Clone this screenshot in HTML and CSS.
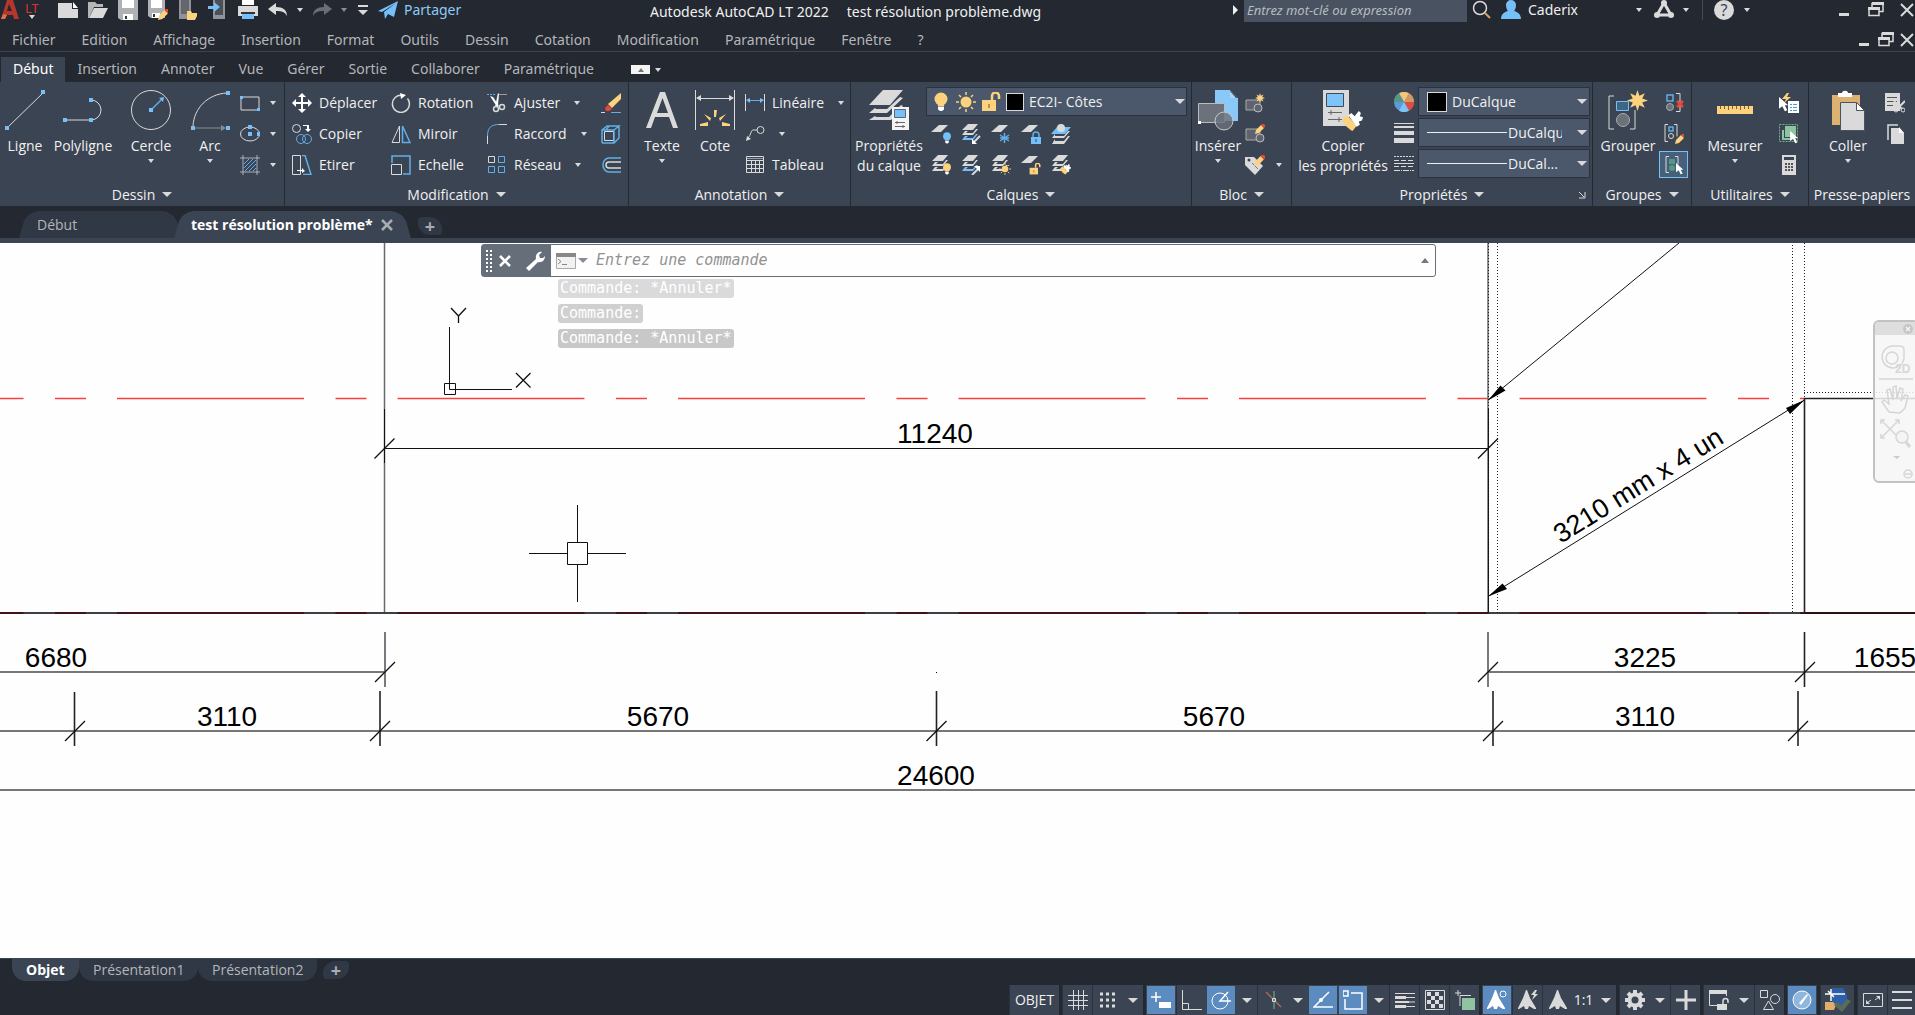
FILE: index.html
```html
<!DOCTYPE html>
<html lang="fr">
  <head>
    <meta charset="UTF-8" />
    <title>Autodesk AutoCAD LT 2022 - test résolution problème.dwg</title>
    <link rel="stylesheet" href="styles.css">
  </head>
  <body>
    <!-- Formes réutilisées par plusieurs icônes -->
    <svg class="defs" width="0" height="0">
      <symbol id="layer" viewBox="0 0 20 20"><path class="fw" d="M8 1h9l-7 7H0z"/></symbol>
      <symbol id="stack" viewBox="0 0 20 20">
        <path class="fw" d="M7 0h10l-5 6H1z"/>
        <path class="fw" d="M4 7l-3 4h11l5-6h-2l-3 4H5l2-2zM4 12l-3 4h11l5-6h-2l-3 4H5l2-2z"/>
      </symbol>
      <symbol id="stack-blue" viewBox="0 0 20 20">
        <path class="fw" d="M7 0h10l-5 6H1zM4 7l-3 4h11l5-6h-2l-3 4H5l2-2z"/>
        <path class="fb" d="M4 12l-3 4h11l5-6h-2l-3 4H5l2-2z"/>
      </symbol>
      <symbol id="bulb" viewBox="0 0 20 20">
        <circle cx="10" cy="7" r="6.500"/><path d="M6 9h8l-1 5H7z"/>
        <path class="fl" d="M7 14.500h6v3l-2 1.500H9l-2-1.500z"/>
      </symbol>
      <symbol id="sun" viewBox="0 0 20 20">
        <circle class="fy" cx="10" cy="10" r="5.500"/>
        <path class="y" stroke-width="1.500" d="M10 0v3M10 17v3M0 10h3M17 10h3M3 3l2 2M15 15l2 2M17 3l-2 2M5 15l-2 2"/>
      </symbol>
      <symbol id="unlock" viewBox="0 0 20 20">
        <path class="fy" d="M1 8h14v11H1z"/><path class="y" stroke-width="2.500" d="M11 8V4a3.500 3.500 0 0 1 7 0v3"/>
        <path d="M8 12v4" stroke="#a87b30" stroke-width="1.500"/>
      </symbol>
      <symbol id="pencil" viewBox="0 0 10 10">
        <path class="fy" d="M0 10l1-4 5-5 3 3-5 5z"/><path class="fr" d="M6 1l1-1h2l1 1v2L9 4z"/>
      </symbol>
      <symbol id="star" viewBox="0 0 20 20">
        <path class="fy" d="M10 0l1.800 5.500L17 3l-2.500 5.200L20 10l-5.500 1.800L17 17l-5.200-2.500L10 20l-1.800-5.500L3 17l2.500-5.200L0 10l5.500-1.800L3 3l5.200 2.500z"/>
      </symbol>
      <symbol id="cursor" viewBox="0 0 12 18"><path d="M0 0l11 10H7l3 6-3 1-3-6-4 3z" fill="#fff"/></symbol>
      <symbol id="brush" viewBox="0 0 20 20">
        <path class="fy" d="M0 8l5-4 9 10-4 5C6 17 2 13 0 8z"/>
        <path class="fl" d="M6 4l3-2 3 3 4-5 2 2-1 3 3 1-1 3-3 1 1 3-3 2z"/>
      </symbol>
      <symbol id="min" viewBox="0 0 16 16"><path class="fw" d="M2 11h10v3H2z"/></symbol>
      <symbol id="restore" viewBox="0 0 16 16">
        <path class="w" stroke-width="1.500" d="M4 5V1.500h11v8h-4"/><path class="w" stroke-width="1.500" d="M1 6.500h10v7H1z"/>
        <path class="fw" d="M4 0h12v3H4zM0 5h12v3H0z"/>
      </symbol>
      <symbol id="close" viewBox="0 0 16 16"><path class="w" stroke-width="2" d="M2 2l12 12M14 2L2 14"/></symbol>
      <symbol id="compass" viewBox="0 0 20 20"><path d="M9 0h1l3 8 6 10v1h-2l-5-3-1 3H8l-1-3-5 3H1v-1L6 8z"/></symbol>
    </svg>

    <header class="titlebar">
      <div class="quick">
        <button class="logo" aria-label="Menu application">
          <svg width="18" height="20" viewBox="0 0 18 20"><path d="M0 19L6 0h6l6 19h-5l-1-4H6l-2 4z" fill="#b5372b"/><path d="M8 4l3 7H6z" fill="#232831"/><path d="M6 15l-2 4H0l2-5z" fill="#e66a52"/></svg>
          <span class="lt">LT<i class="caret"></i></span>
        </button>
        <button aria-label="Nouveau"><svg width="20" height="20"><path class="fw" d="M0 3h14v6h6v9H0z"/><path class="fl" d="M15 2l5 6h-5z"/></svg></button>
        <button aria-label="Ouvrir"><svg width="20" height="20"><path class="fw" d="M0 2h7l2 2h6v3H6L1 18H0z" opacity=".8"/><path class="fw" d="M6 8h14l-5 10H1z"/></svg></button>
        <button aria-label="Enregistrer"><svg width="20" height="20"><path d="M0 0h20v20H3l-3-2z" fill="#aeb1b5"/><path class="fl" d="M4 0h12v8H4zM5 14h10v6H5z"/><path d="M7 16h2v3H7z" fill="#333"/></svg></button>
        <button aria-label="Enregistrer sous"><svg width="20" height="20"><path d="M0 0h17v18H3l-3-2z" fill="#aeb1b5"/><path class="fl" d="M3 0h11v8H3zM4 13h8v5H4z"/><path d="M5 14h2v3H5z" fill="#333"/><use href="#pencil" x="10" y="9" width="11" height="11"/></svg></button>
        <button aria-label="Ouvrir depuis mobile"><svg width="20" height="20"><path d="M1 0h12v19H1z" fill="#8f9296"/><path d="M3 0h8v14H3z" fill="#63676d"/><path class="fy" d="M9 11h4l1 2h5v3l-2 4H9z"/></svg></button>
        <button aria-label="Enregistrer sur mobile"><svg width="20" height="20"><path d="M5 0h12v19H5z" fill="#8f9296"/><path d="M7 0h8v15H7z" fill="#4b5058"/><path class="fb" d="M0 6h6V2l6 5-6 5V9H0z"/></svg></button>
        <button aria-label="Imprimer"><svg width="20" height="20"><path class="fl" d="M4 0h12v5H4z"/><path class="fw" d="M0 6h20v10H0z"/><path d="M3 12h14v2H3z" fill="#333"/><path class="fb" d="M4 14h12v5H4z"/></svg></button>
        <button aria-label="Annuler"><svg width="20" height="20"><path class="fw" d="M0 9l8-6v4c7 0 11 3 11 9-2-4-5-5-11-5v4z"/></svg></button>
        <button class="narrow" aria-label="Historique annuler"><i class="caret"></i></button>
        <button aria-label="Rétablir"><svg width="20" height="20"><path fill="#6a6f77" d="M20 9l-8-6v4C5 7 1 10 1 16c2-4 5-5 11-5v4z"/></svg></button>
        <button class="narrow" aria-label="Historique rétablir"><i class="caret dim"></i></button>
        <button class="custom" aria-label="Personnaliser"><svg width="12" height="12"><path class="fw" d="M1 1h10v2H1zM1 6h10l-5 5z"/></svg></button>
        <button class="share"><svg width="20" height="20"><path class="fb" d="M0 11L20 1l-4 16-6-3-3 5-1-7 12-9L4 12z"/></svg>Partager</button>
      </div>
      <div class="app-title"><span>Autodesk AutoCAD LT 2022</span><span>test résolution problème.dwg</span></div>
      <div class="info-center">
        <i class="caret-right"></i>
        <input class="search" type="text" aria-label="Recherche" placeholder="Entrez mot-clé ou expression">
        <button aria-label="Rechercher"><svg width="20" height="20"><circle class="w" cx="8" cy="8" r="6.500" stroke-width="1.500"/><path d="M13 13l5 5" stroke="#d9a06a" stroke-width="2"/></svg></button>
        <button class="user"><svg width="20" height="20"><path class="fb" d="M5 5a5 5 0 0 1 10 0c0 4-2 6-2 6s7 1 7 8H0c0-7 7-8 7-8S5 9 5 5z"/></svg>Caderix<i class="caret"></i></button>
        <button class="apps" aria-label="App Store"><svg width="20" height="20"><path class="w" stroke-width="3" d="M10 3L3 15h14z"/><circle class="fw" cx="10" cy="3" r="3"/><circle class="fw" cx="3" cy="15" r="3"/><circle class="fw" cx="17" cy="15" r="3"/></svg><i class="caret"></i></button>
        <button class="help" aria-label="Aide"><svg width="20" height="20"><circle class="fw" cx="10" cy="10" r="10"/><text x="10" y="16" text-anchor="middle" class="q">?</text></svg><i class="caret"></i></button>
        <div class="win">
          <button aria-label="Réduire"><svg width="16" height="16"><use href="#min"/></svg></button>
          <button aria-label="Restaurer"><svg width="16" height="16"><use href="#restore"/></svg></button>
          <button aria-label="Fermer"><svg width="16" height="16"><use href="#close"/></svg></button>
        </div>
      </div>
    </header>

    <nav class="menubar">
      <a href="#">Fichier</a><a href="#">Edition</a><a href="#">Affichage</a><a href="#">Insertion</a><a href="#">Format</a><a href="#">Outils</a><a href="#">Dessin</a><a href="#">Cotation</a><a href="#">Modification</a><a href="#">Paramétrique</a><a href="#">Fenêtre</a><a href="#">?</a>
      <div class="win">
        <button aria-label="Réduire le dessin"><svg width="16" height="16"><use href="#min"/></svg></button>
        <button aria-label="Restaurer le dessin"><svg width="16" height="16"><use href="#restore"/></svg></button>
        <button aria-label="Fermer le dessin"><svg width="16" height="16"><use href="#close"/></svg></button>
      </div>
    </nav>

    <nav class="ribbon-tabs">
      <a href="#" class="active">Début</a><a href="#">Insertion</a><a href="#">Annoter</a><a href="#">Vue</a><a href="#">Gérer</a><a href="#">Sortie</a><a href="#">Collaborer</a><a href="#">Paramétrique</a>
      <button class="collapse" aria-label="Réduire le ruban"><i class="caret-up"></i></button>
      <button class="narrow" aria-label="Options du ruban"><i class="caret"></i></button>
    </nav>

    <section class="ribbon">
      <div class="panel p-dessin">
        <div class="body">
          <button class="big w50"><svg width="40" height="42"><path class="w" d="M2 38L39 2"/><path class="fb" d="M0 36h4v4H0zM36 0h4v4h-4z"/></svg>Ligne</button>
          <button class="big w66"><svg width="40" height="42"><path class="w" d="M2 30h26a10 10 0 0 0 0-20"/><path class="fb" d="M0 28h4v4H0zM26 28h4v4h-4zM26 8h4v4h-4z"/></svg>Polyligne</button>
          <button class="big w70"><svg width="40" height="42"><circle class="w" cx="20" cy="20" r="19.500"/><path class="b" stroke-width="1.500" d="M20 20L30 10"/><path class="fb" d="M18 18h4v4h-4zM33 7l-1 5-4-4z"/></svg>Cercle<i class="caret"></i></button>
          <button class="big w48"><svg width="40" height="42"><path class="w" d="M3 36C4 18 18 4 37 3"/><path d="M5 38h27" stroke="#888c92"/><path d="M31 35l5 3-5 3z" fill="#888c92"/><path class="fb" d="M1 36h4v4H1zM36 36h4v4h-4zM36 1h4v4h-4z"/></svg>Arc<i class="caret"></i></button>
          <div class="rows">
            <button aria-label="Rectangle"><svg width="20" height="20"><path class="w" d="M1 4h18v13H1z"/><path class="fb" d="M0 3h3v3H0zM17 15h3v3h-3z"/></svg><i class="caret"></i></button>
            <button aria-label="Ellipse"><svg width="20" height="20"><ellipse class="w" cx="10" cy="10" rx="9.500" ry="7"/><path class="fb" d="M8 1h4v4H8zM8 8h4v4H8zM17 8h3v4h-3z"/></svg><i class="caret"></i></button>
            <button aria-label="Hachures"><svg width="20" height="20"><path class="w" opacity=".7" d="M3 0v20M17 0v20M0 3h20M0 17h20"/><path class="b" d="M4 9l5-5M4 13l9-9M5 16L16 5M9 16l7-7M13 16l3-3"/></svg><i class="caret"></i></button>
          </div>
        </div>
        <div class="panel-title">Dessin<i class="caret lg"></i></div>
      </div>

      <div class="panel p-modif">
        <div class="body">
          <div class="rows c99">
            <button><svg width="20" height="20"><path class="fl" d="M10 0l4 4h-3v5h5V6l4 4-4 4v-3h-5v5h3l-4 4-4-4h3v-5H4v3l-4-4 4-4v3h5V4H6z"/></svg>Déplacer</button>
            <button><svg width="20" height="20"><circle class="w" cx="4.500" cy="4.500" r="4"/><path class="fl" d="M11 1h6v4h2l-3 3-3-3h2V2h-4z"/><circle class="b" cx="9" cy="15" r="4.500"/><circle class="b" cx="15" cy="15" r="4.500"/></svg>Copier</button>
            <button><svg width="20" height="20"><path class="w" d="M.5.500h8v19h-8z"/><path class="b" stroke-width="1.500" d="M10 .5h3l6 19h-8"/><path class="fl" d="M5 15h5v-2l3 3-3 2v-2H5z"/></svg>Etirer</button>
          </div>
          <div class="rows c96">
            <button><svg width="20" height="20"><path class="w" stroke-width="1.500" d="M16.500 5.500a8.500 8.500 0 1 1-5-3"/><path class="fl" d="M9 0l6 2-5 4z"/></svg>Rotation</button>
            <button><svg width="20" height="20"><path class="w" d="M8.500 2v16.500H1z"/><path class="b" stroke-width="1.500" d="M11.500 2v16.500H19z"/></svg>Miroir</button>
            <button><svg width="20" height="20"><path class="b" stroke-width="1.500" d="M1 8V1h18v18h-7"/><path class="w" d="M.5 9.500h10v10H.5z"/></svg>Echelle</button>
          </div>
          <div class="rows c112">
            <button><svg width="20" height="20"><path class="b" stroke-dasharray="2 1" d="M0 1.500h8"/><path class="w" opacity=".6" d="M12 1.500h8"/><path class="fl" d="M3 3l3 1 6 9-2 1zM11 0l1 1-1 11-3 2z"/><circle class="w" cx="9" cy="16" r="2.500" stroke-width="1.500"/><circle class="w" cx="15" cy="14" r="2.500" stroke-width="1.500"/></svg>Ajuster<i class="caret"></i></button>
            <button><svg width="20" height="20"><path class="b" d="M.5 12C.5 4 4 .5 12 .5"/><path class="w" d="M12 .5h8M.5 12v8"/></svg>Raccord<i class="caret"></i></button>
            <button><svg width="20" height="20"><path class="w" d="M1.500 1.500h6v6h-6z"/><path class="b" d="M11.500 1.500h6v6h-6zM1.500 11.500h6v6h-6zM11.500 11.500h6v6h-6z"/></svg>Réseau<i class="caret"></i></button>
          </div>
          <div class="rows">
            <button aria-label="Effacer"><svg width="20" height="20"><path class="fy" d="M20 0v6L11 15l-4-4z"/><path class="fr" d="M7 12l4 4-3 2H5l-1-3z"/><path class="w" d="M0 19.500h4"/><path class="b" d="M10 19.500h10"/></svg></button>
            <button aria-label="Décomposer"><svg width="20" height="20"><path class="w" d="M3.500 7.500h9v9h-9z"/><path class="b" stroke-width="1.500" d="M1 19V6h12v13H1M1 6l5-4h12l-5 4M18 2v12l-5 5M8 2L5 6"/></svg></button>
            <button aria-label="Décaler"><svg width="20" height="20"><path class="b" stroke-width="1.500" d="M20 3H8a6 7 0 0 0 0 14h12"/><path class="w" stroke-width="1.500" d="M20 7H8a3 3 0 0 0 0 6h12"/></svg></button>
          </div>
        </div>
        <div class="panel-title">Modification<i class="caret lg"></i></div>
      </div>

      <div class="panel p-annot">
        <div class="body">
          <button class="big w50"><svg width="40" height="42"><path class="fw" d="M4 38L18 2h5l13 36h-5l-4-11H13L9 38zM15 23h11L20.500 8z"/></svg>Texte<i class="caret"></i></button>
          <button class="big w56"><svg width="40" height="42"><path class="w" d="M.5 0v40M39.500 0v40M3 8.500h34"/><path class="fw" d="M1 8l5-3v6zM39 8l-5-3v6z"/><path class="fy" d="M19 20h3l-1 7h-2zM9 24l7 4-1 3zM31 24l-7 4 1 3zM5 34l8-2v4H5zM35 34l-8-2v4h8z"/></svg>Cote</button>
          <div class="rows">
            <button><svg width="20" height="20"><path class="w" d="M.5 1v17M19.500 1v17"/><path class="b" d="M3 7.500h14"/><path class="fb" d="M1 7l4-2v5zM19 7l-4-2v5z"/></svg>Linéaire<i class="caret"></i></button>
            <button aria-label="Ligne de repère"><svg width="20" height="20"><circle class="w" cx="15.500" cy="6" r="3.500"/><path class="w" d="M12 6H8c-2 0-2 5-5 8"/><path class="fw" d="M1 17l1-5 4 3z"/></svg><i class="caret"></i></button>
            <button><svg width="20" height="20"><path class="w" d="M1.500 1.500h17v16h-17zM1 5.500h18M1 9.500h18M1 13.500h18M6.500 5v12M10.500 5v12M14.500 5v12"/><path class="w" opacity=".6" d="M2 3.500h16"/></svg>Tableau</button>
          </div>
        </div>
        <div class="panel-title">Annotation<i class="caret lg"></i></div>
      </div>

      <div class="panel p-calques">
        <div class="body">
          <button class="big w74"><svg width="40" height="42"><path class="fw" d="M14 0h20L21 15H0z"/><path class="fw" d="M6 18l-6 5h18L34 8l-3-1-13 12H7zM6 26l-6 4h22l12-14-2-1-12 12H7z"/><path fill="#f4f4f4" d="M23 17h17v23H23z"/><path fill="#75c0f8" stroke="#3f4a5a" stroke-width=".8" d="M25.500 19.500h11v8h-11z"/><path d="M26 32.500h10M26 36.500h10M28 31v3M34 35v3" stroke="#666"/></svg>Propriétés<br>du calque</button>
          <div class="rows">
            <label class="combo layer-combo">
              <svg width="20" height="20" class="fy"><use href="#bulb"/></svg>
              <svg width="20" height="20"><use href="#sun"/></svg>
              <svg width="20" height="20"><use href="#unlock"/></svg>
              <span class="swatch"></span>
              <select aria-label="Calque courant"><option>EC2I- Côtes</option></select><i class="caret lg"></i>
            </label>
            <div class="tools">
              <button aria-label="Désactiver"><svg width="20" height="20"><use href="#layer"/><use href="#bulb" class="fb" x="10" y="8" width="12" height="12"/></svg></button>
              <button aria-label="Isoler"><svg width="20" height="20"><use href="#stack-blue"/><path class="w" stroke-width="2" d="M19 12l-6 6"/><path class="fl" d="M11 15v5h5z"/></svg></button>
              <button aria-label="Geler"><svg width="20" height="20"><use href="#layer"/><path class="b" stroke-width="1.500" d="M13.500 9v10M9 11l9 6M9 17l9-6M9 14h9"/></svg></button>
              <button aria-label="Verrouiller"><svg width="20" height="20"><use href="#layer"/><path class="fb" d="M10 13h10v7H10z"/><path class="b" stroke-width="1.500" d="M12 13v-2a3 3 0 0 1 6 0v2"/><path d="M15 15v3" stroke="#2c4d6c"/></svg></button>
              <button aria-label="Rendre courant"><svg width="20" height="20"><path class="fb" d="M6 3h14l-6 7H0z"/><circle class="fw" cx="10" cy="4" r="4"/><path class="fw" d="M4 10l-3 4h12l6-7h-2l-4 5H4zM4 15l-3 5h12l6-8h-2l-4 5H4z"/></svg></button>
            </div>
            <div class="tools">
              <button aria-label="Activer tous"><svg width="20" height="20"><use href="#stack"/><use href="#bulb" class="fy" x="10" y="8" width="12" height="12"/></svg></button>
              <button aria-label="Annuler isoler"><svg width="20" height="20"><use href="#stack-blue"/><path class="w" stroke-width="2" d="M11 20l6-6"/><path class="fl" d="M19 11v6l-6-6z"/></svg></button>
              <button aria-label="Libérer tous"><svg width="20" height="20"><use href="#stack"/><use href="#sun" x="8" y="8" width="12" height="12"/></svg></button>
              <button aria-label="Déverrouiller"><svg width="20" height="20"><use href="#layer"/><use href="#unlock" x="8" y="8" width="12" height="12"/></svg></button>
              <button aria-label="Copier le calque"><svg width="20" height="20"><use href="#stack"/><use href="#brush" x="9" y="9" width="11" height="11"/></svg></button>
            </div>
          </div>
        </div>
        <div class="panel-title">Calques<i class="caret lg"></i></div>
      </div>

      <div class="panel p-bloc">
        <div class="body">
          <button class="big w50"><svg width="40" height="42"><path fill="#8ac8f7" d="M17 0h15l8 8v23H17z"/><path fill="#3b4453" d="M32 0l8 8h-8z"/><path fill="#a8d6f8" d="M32 1l6 7h-6z"/><path fill="#6b727c" stroke="#bbb" d="M.5 13.500h26v19H.5z"/><circle cx="26" cy="31" r="9" fill="#6b727c" fill-opacity=".8" stroke="#c8c8c8"/><path class="fl" d="M0 31h3v3H0z"/></svg>Insérer<i class="caret"></i></button>
          <div class="rows">
            <button aria-label="Créer"><svg width="20" height="20"><path fill="#5d646f" stroke="#aaa" d="M1 17V7h14v10z"/><circle cx="13" cy="15" r="4" fill="#5d646f" stroke="#bbb"/><use href="#star" x="10" y="0" width="10" height="10"/></svg></button>
            <button aria-label="Modifier"><svg width="20" height="20"><path fill="#5d646f" stroke="#aaa" d="M1 16V5h14v11z"/><circle cx="15" cy="14" r="4" fill="#5d646f" stroke="#bbb"/><use href="#pencil" x="10" y="0" width="10" height="10"/></svg></button>
            <button aria-label="Attributs"><svg width="20" height="20"><path class="fw" d="M0 2h9l9 9-8 9L0 10z"/><circle cx="4" cy="5" r="1.500" fill="#3b4453"/><path d="M7 8l6 6" stroke="#777"/><use href="#pencil" x="9" y="0" width="11" height="11"/></svg><i class="caret"></i></button>
          </div>
        </div>
        <div class="panel-title">Bloc<i class="caret lg"></i></div>
      </div>

      <div class="panel p-prop">
        <div class="body">
          <button class="big w100"><svg width="40" height="42"><path class="fw" d="M0 0h26v36H0z"/><path fill="#7fc4f8" stroke="#3f4a5a" d="M3.500 3.500h17v13h-17z"/><path d="M5 22.500h14M5 29.500h14M8 20v5M16 27v5" stroke="#666"/><use href="#brush" x="19" y="21" width="21" height="21"/></svg>Copier<br>les propriétés</button>
          <div class="rows icons">
            <svg width="20" height="20"><circle cx="10" cy="10" r="10" fill="#5b9cd8"/><path d="M10 10L5 1.300A10 10 0 0 1 15 1.300z" fill="#f5c67a"/><path d="M10 10l5-8.700A10 10 0 0 1 20 10z" fill="#d29a62"/><path d="M10 10h10a10 10 0 0 1-5 8.700z" fill="#e04c3f"/><path d="M10 10l5 8.700a10 10 0 0 1-10 0z" fill="#7fc4f8"/><path d="M10 10H0A10 10 0 0 1 5 1.300z" fill="#579685"/></svg>
            <svg width="20" height="20"><path class="fw" d="M0 0h20v1H0zM0 3h20v2H0zM0 8h20v4H0zM0 15h20v5H0z"/></svg>
            <svg width="20" height="20"><path class="w" stroke-dasharray="2 1" d="M0 2.500h20"/><path class="w" stroke-dasharray="5 2" d="M0 6.500h20M0 12.500h20"/><path class="w" d="M0 9.500h20"/><path class="w" stroke-dasharray="6 1 1 1" d="M0 16.500h20"/></svg>
          </div>
          <div class="rows combos">
            <label class="combo"><span class="swatch"></span><select aria-label="Couleur"><option>DuCalque</option></select><i class="caret lg"></i></label>
            <label class="combo"><span class="line"></span><select class="clip" aria-label="Epaisseur"><option>DuCalque</option></select><i class="caret lg"></i></label>
            <label class="combo"><span class="line"></span><select class="clip" aria-label="Type de ligne"><option>DuCal...</option></select><i class="caret lg"></i></label>
          </div>
        </div>
        <div class="panel-title">Propriétés<i class="caret lg"></i><svg class="launcher" width="8" height="8"><path class="w" d="M1 1l5 5M7 1v6H1"/></svg></div>
      </div>

      <div class="panel p-group">
        <div class="body">
          <button class="big w62"><svg width="40" height="42"><path class="w" d="M6 6H1v33h5M22 39h5V20"/><path fill="#3f6584" stroke="#75c0f8" d="M8.500 11.500h12v9h-12z"/><circle cx="15" cy="30" r="6.500" fill="#6b727c" stroke="#aaa"/><use href="#star" x="19" y="0" width="21" height="21"/></svg>Grouper</button>
          <div class="rows">
            <button aria-label="Dissocier"><svg width="20" height="20"><path class="w" d="M12 .5h4v18h-4"/><path class="b" stroke-width="1.500" d="M3 2h6v6H3z"/><circle cx="6" cy="14" r="3.500" fill="#6b727c" stroke="#aaa"/><path d="M13 8l6 6M19 8l-6 6" stroke="#e8473a" stroke-width="2.500"/></svg></button>
            <button aria-label="Modifier le groupe"><svg width="20" height="20"><path class="w" d="M4 .5H1v17h3M10 .5h3v12"/><path class="b" stroke-width="1.500" d="M5 3h4v4H5z"/><circle class="w" cx="7" cy="12" r="2.500"/><use href="#pencil" x="11" y="10" width="10" height="10"/></svg></button>
            <button class="on" aria-label="Sélection de groupe"><svg width="20" height="20"><path class="w" d="M5 1.500H2v16h3M11 1.500h3v8"/><path fill="#579685" d="M5 4h6v5H5z"/><circle cx="8" cy="13" r="3" fill="#579685"/><use href="#cursor" x="12" y="8" width="8" height="12"/></svg></button>
          </div>
        </div>
        <div class="panel-title">Groupes<i class="caret lg"></i></div>
      </div>

      <div class="panel p-util">
        <div class="body">
          <button class="big w70"><svg width="40" height="42"><path class="fy" d="M2 16h36v8H2z"/><path d="M5.500 16v3M9.500 16v3M13.500 16v4M17.500 16v3M21.500 16v3M25.500 16v4M29.500 16v3M33.500 16v3" stroke="#7a6336"/></svg>Mesurer<i class="caret"></i></button>
          <div class="rows">
            <button aria-label="Sélection rapide"><svg width="20" height="20"><path class="fy" d="M8 0L3 6h4L5 10l7-6H8l2-4z"/><use href="#cursor" x="0" y="4" width="10" height="15"/><path class="fl" d="M9 8h11v12H9z"/><path stroke="#4a9bd8" d="M11 11.500h2M14 11.500h4M11 14.500h2M14 14.500h4M11 17.500h2M14 17.500h4"/></svg></button>
            <button aria-label="Tout sélectionner"><svg width="20" height="20"><path fill="none" stroke="#6fae87" stroke-dasharray="2 1" d="M.5.500h18v17H.5z"/><path fill="#8fc4a2" d="M6 2h11v11H6zM3 6h2v8h8v2H3z"/><use href="#cursor" x="11" y="7" width="9" height="13"/></svg></button>
            <button aria-label="Calculatrice"><svg width="20" height="20"><path class="fw" d="M3 0h14v20H3z"/><path fill="#3b4453" d="M5 2h10v3H5z"/><path stroke="#555" stroke-width="2" stroke-dasharray="2 1" d="M6 9h9M6 12h9M6 15h9"/></svg></button>
          </div>
        </div>
        <div class="panel-title">Utilitaires<i class="caret lg"></i></div>
      </div>

      <div class="panel p-clip">
        <div class="body">
          <button class="big w70"><svg width="40" height="42"><path fill="#dcb172" d="M4 5h28v30H4z"/><path class="fl" d="M10 7V3h4c0-3 6-3 6 0h4v4z"/><path class="fw" stroke="#4a5362" d="M12.500 12.500h16l8 8v20h-24z"/><path class="fl" stroke="#4a5362" d="M28.500 12.500v8h8z"/></svg>Coller<i class="caret"></i></button>
          <div class="rows">
            <button aria-label="Couper"><svg width="20" height="20"><path class="fw" d="M0 0h15v18H0z"/><path stroke="#555" d="M2 4.500h10M2 8.500h10M2 12.500h6"/><path class="w" stroke-width="2" d="M9 8l8 8M20 8l-8 8"/><circle class="w" cx="11" cy="17" r="2"/><circle class="w" cx="18" cy="17" r="2"/></svg></button>
            <button aria-label="Copier"><svg width="20" height="20"><path class="w" stroke-width="1.500" d="M3 16V1h10"/><path class="fw" d="M6 4h8l5 5v11H6z"/><path class="fl" d="M14 3l5 6h-5z"/></svg></button>
          </div>
        </div>
        <div class="panel-title">Presse-papiers</div>
      </div>
    </section>

    <nav class="file-tabs">
      <a href="#" class="file-tab">Début</a>
      <a href="#" class="file-tab active">test résolution problème*<svg width="12" height="12"><path stroke="#a9adb3" stroke-width="2.500" d="M1 1l10 10M11 1L1 11"/></svg></a>
      <button class="tab-plus" aria-label="Nouveau dessin">+</button>
    </nav>

    <main class="canvas">
      <!-- Le dessin est coté depuis le haut de la fenêtre -->
      <svg class="drawing" width="100%" height="100%">
        <g transform="translate(0 -243)">
          <path class="axis" d="M-163.500 398.500H1804"/>
          <path class="edge" d="M384.500 243v370M1488 243v370"/>
          <path class="thin" d="M384.500 409v54M1488.500 409v204"/>
          <path class="base" d="M0 613H1915"/>
          <path class="axis dark" d="M-163.500 613H1804"/>
          <path class="base dark" d="M1804 613h111"/>
          <path class="dots" d="M1488.500 243v370M1497.500 243v370M1792.500 245v368M1804.500 243v156M1804 392.500h111"/>
          <path class="solid" d="M1804.500 398v215M1804 398.500h111"/>

          <path class="thin" d="M384 448.500H1488M1488 400L1679 243M1488 596.500L1804.500 400"/>
          <path d="M1488 400.500l12.500-15 5 5zM1488 596.500l14.500-13 4.500 5.500zM1804.500 400l-18.500 8 4 6z"/>

          <path class="dim" d="M0 672H385M1488 672H1915M0 731H1915M0 790H1915"/>
          <path class="ext" d="M385 632v55M1488 632v55"/>
          <path class="solid" d="M74.500 692v54M380 691v55M936.500 691v55M1493 691v55M1798 691v55M1804.500 632v55"/>
          <path class="tick" d="M374.500 458.500l20-20M1478 458.500l20-20M375 682l20-20M1478 682l20-20M1795 682l20-20M65 741l20-20M370 741l20-20M926.500 741l20-20M1483 741l20-20M1788 741l20-20"/>
          <path d="M936 672h1v1h-1z"/>

          <g class="cote">
            <text x="935" y="443">11240</text>
            <text x="56" y="667">6680</text>
            <text x="1645" y="667">3225</text>
            <text x="1885" y="667">1655</text>
            <text x="227" y="726">3110</text>
            <text x="658" y="726">5670</text>
            <text x="1214" y="726">5670</text>
            <text x="1645" y="726">3110</text>
            <text x="936" y="785">24600</text>
            <text class="slanted" transform="translate(1643 493) rotate(-31.800)">3210 mm x 4 un</text>
          </g>

          <!-- SCU -->
          <path class="thin" d="M449.500 327v62.500h62.500M444.500 383.500h11v11h-11z"/>
          <path class="tick" d="M451 308l7.500 8 7.500-8M458.500 316v7M516 373l14.500 14.500M530.500 373l-14.500 14.500"/>
          <!-- Réticule -->
          <path class="thin" d="M577.500 505v37M577.500 565v37M529 553.500h38M588 553.500h38M567.500 542.500h20v22h-20z"/>
        </g>
      </svg>

      <div class="cmd">
        <div class="cmd-bar">
          <div class="cmd-tools">
            <span class="grip"></span>
            <button aria-label="Fermer la ligne de commande"><svg width="12" height="12"><path class="l" stroke-width="2.500" d="M1 1l10 10M11 1L1 11"/></svg></button>
            <button class="wrench" aria-label="Personnaliser la commande"><svg width="20" height="20"><path class="fl" d="M1 17L11 8c-1-4 2-8 6-7l-3 3 1 3 3 0 2-2c0 4-3 7-7 6L4 20z"/></svg></button>
          </div>
          <svg class="prompt" width="20" height="16"><path fill="#f2f2f2" stroke="#aaa" d="M.5.500h19v15H.5z"/><path fill="#888" d="M0 0h20v4H0z"/><path fill="none" stroke="#888" d="M2 6l3 2.500L2 11M6 11.500h5"/></svg>
          <i class="caret lg gray"></i>
          <input type="text" aria-label="Commande" placeholder="Entrez une commande">
          <i class="caret-up gray"></i>
        </div>
        <div class="history"><span>Commande: *Annuler*</span><span>Commande:</span><span>Commande: *Annuler*</span></div>
      </div>

      <aside class="navbar">
        <svg width="42" height="159" fill="none" stroke="#d6d6d6" stroke-width="1.500">
          <path d="M0 13V4q0-4 4-4h38v13z" fill="#dedede" stroke="none"/>
          <circle cx="33" cy="7" r="5" fill="#c6c6c6" stroke="none"/><path d="M31 5l4 4M35 5l-4 4" stroke="#f4f4f4"/>
          <path d="M17 24h8q4 0 4 4v8a11 11 0 1 1-12-12z"/><circle cx="17" cy="36" r="6"/>
          <text x="20" y="51" class="nav-txt">2D</text>
          <path d="M4 57h34"/>
          <path d="M14 90l-7-10 2-2 5 4-2-14 3-1 3 11V65l3-1 1 13 3-11 3 1-2 12 4-6 3 1-3 12-5 5z"/>
          <path d="M6 98l18 18M24 98L6 116M6 102v-4h4M20 98h4v4M6 112v4h4"/><circle cx="27" cy="115" r="6" fill="#f4f4f4"/><path d="M31 120l4 5" stroke-width="3"/>
          <path d="M18 134h7l-3 3z" fill="#ccc" stroke="none"/>
          <circle cx="33" cy="152" r="4"/><path d="M30 152h6"/>
        </svg>
      </aside>
    </main>

    <nav class="layout-tabs">
      <a href="#" class="active">Objet</a><a href="#">Présentation1</a><a href="#">Présentation2</a><button aria-label="Nouvelle présentation">+</button>
    </nav>

    <footer class="status">
      <div class="grp"><button class="model">OBJET</button></div>
      <div class="grp">
        <button aria-label="Grille"><svg width="20" height="20"><path class="w" d="M5.500 0v20M10.500 0v20M15.500 0v20M0 5.500h20M0 10.500h20M0 15.500h20"/></svg></button>
        <button aria-label="Accrochage"><svg width="20" height="20"><path class="w" stroke-width="3" stroke-dasharray="3 3" d="M2 4h15M2 10h15M2 16h15"/></svg></button>
        <button class="drop" aria-label="Options"><i class="caret lg"></i></button>
      </div>
      <div class="grp">
        <button class="on" aria-label="Saisie dynamique"><svg width="20" height="20"><path class="l" stroke-width="1.500" d="M5 2v10M0 7h10"/><path class="fl" d="M8 12h12v6H8z"/></svg></button>
        <button aria-label="Ortho"><svg width="20" height="20"><path class="w" d="M.5 0v19.500H20M.5 13.500h6v6"/></svg></button>
        <button class="on" aria-label="Repérage polaire"><svg width="20" height="20"><circle class="l" cx="9" cy="11" r="8"/><path class="l" stroke-width="1.500" d="M17 2L9 11h11"/></svg></button>
        <button class="drop" aria-label="Options polaires"><i class="caret lg"></i></button>
        <button aria-label="Isométrique"><svg width="20" height="20"><path stroke="#b06a4a" stroke-width="1.500" d="M3 2l15 15"/><path stroke="#579685" stroke-width="1.500" d="M11 1v18"/><path class="w" d="M9.500 8.500h3v3h-3z"/></svg></button>
        <button class="drop" aria-label="Options isométriques"><i class="caret lg"></i></button>
        <button class="on" aria-label="Repérage d'accrochage"><svg width="20" height="20"><path class="l" stroke-width="1.500" d="M16 2L1 17h19"/><circle class="fl" cx="8" cy="10" r="2"/></svg></button>
        <button class="on" aria-label="Accrochage aux objets"><svg width="20" height="20"><path class="l" stroke-width="1.500" d="M8 3h11v16H2V9M0 1h5v5H0z"/></svg></button>
        <button class="drop" aria-label="Options d'accrochage"><i class="caret lg"></i></button>
        <button aria-label="Epaisseur de ligne"><svg width="20" height="20"><path class="w" d="M0 3.500h20"/><path class="fw" d="M0 6h11v3H0zM0 11h14v2H0zM0 15h11v3H0z"/><path class="w" d="M11 7.500h9M0 16.500h20M11 12h9"/></svg></button>
        <button aria-label="Transparence"><svg width="20" height="20"><path class="w" d="M.5.500h19v19H.5z"/><path class="w" stroke-width="4" stroke-dasharray="4 4" d="M2 4h16M2 12h16"/><path class="w" stroke-width="4" stroke-dasharray="4 4" d="M6 8h12M6 16h12"/></svg></button>
        <button aria-label="Cycle de sélection"><svg width="20" height="20"><path class="w" d="M3 0v6M0 3h6M5 16V5.500h11"/><path fill="#8fc4a2" d="M7 8h13v12H7z"/></svg></button>
      </div>
      <div class="grp">
        <button class="on" aria-label="Visibilité des annotations"><svg width="20" height="20"><use href="#compass" class="fl" x="-1"/><circle class="l" cx="16" cy="4" r="3"/></svg></button>
        <button aria-label="Echelle automatique"><svg width="20" height="20"><use href="#compass" class="fw" x="-1"/><path class="fw" d="M17 0l-4 5h3l-2 5 6-6h-3l2-4z"/></svg></button>
        <button aria-label="Annotation"><svg width="20" height="20"><use href="#compass" class="fw"/></svg></button>
        <button class="scale">1:1</button>
        <button class="drop" aria-label="Echelles"><i class="caret lg"></i></button>
      </div>
      <div class="grp">
        <button aria-label="Espace de travail"><svg width="20" height="20"><circle class="w" cx="10" cy="10" r="5.500" stroke-width="4"/><path class="w" stroke-width="4" d="M10 0v4M10 16v4M0 10h4M16 10h4M3 3l3 3M14 14l3 3M17 3l-3 3M6 14l-3 3"/></svg></button>
        <button class="drop" aria-label="Espaces"><i class="caret lg"></i></button>
        <button aria-label="Moniteur"><svg width="20" height="20"><path class="w" stroke-width="3" d="M10 0v20M0 10h20"/></svg></button>
      </div>
      <div class="grp">
        <button aria-label="Verrouiller interface"><svg width="20" height="20"><path class="w" d="M8 15.500H.5V.5h17V6"/><path class="fw" d="M0 0h18v4H0zM8 14h10v6H8z"/><path class="w" stroke-width="1.500" d="M14 14v-3a2.500 2.500 0 0 1 5 0v2"/></svg></button>
        <button class="drop" aria-label="Verrous"><i class="caret lg"></i></button>
        <button aria-label="Isoler objets"><svg width="20" height="20"><path class="w" d="M.5.500h7v7h-7zM8.500 11l5 8.500h-10z"/><circle class="w" cx="15" cy="9" r="4.500"/></svg></button>
      </div>
      <div class="grp"><button class="on" aria-label="Performances"><svg width="20" height="20"><circle cx="10" cy="10" r="9" fill="#8fb6dc" stroke="#fff"/><path class="fl" d="M15 4l1 1-7 10-2-2z"/></svg></button></div>
      <div class="grp"><button class="wide" aria-label="DWG approuvé"><svg width="26" height="24"><path fill="#2d5fa8" d="M7 0h11l4 7v11H7z"/><path fill="#e2ad6a" d="M0 14h8l3 3-2 5H0z"/><path class="l" stroke-width="1.500" d="M6 1v12M0 6h20M3 3l6 6"/><path fill="#5c6b56" d="M9 17l3-3 4 4 6-7 4 2-9 11z"/></svg></button></div>
      <div class="grp">
        <button aria-label="Nettoyer l'écran"><svg width="20" height="20"><path class="w" d="M.5 3.500h19v13H.5z"/><path class="fw" d="M13 6h4v4zM3 10l4 4H3z"/><path class="w" d="M12 10l4-3M8 10l-4 3"/></svg></button>
        <button class="menu" aria-label="Personnalisation"><svg width="20" height="20"><path class="w" stroke-width="2" d="M0 2h20M0 10h20M0 18h20"/></svg></button>
      </div>
    </footer>
  </body>
</html>
```
FILE: styles.css
```css
* {
  box-sizing: border-box;
}

body {
  margin: 0;
  height: 100vh;
  display: flex;
  flex-direction: column;
  overflow: hidden;
  background: #232831;
  color: #f0f0f0;
  font: 14px/20px "Open Sans", "Noto Sans", sans-serif;
}

button {
  display: flex;
  align-items: center;
  justify-content: center;
  padding: 0;
  border: 0;
  background: none;
  color: inherit;
  font: inherit;
  white-space: nowrap;
}

a {
  color: inherit;
  text-decoration: none;
  white-space: nowrap;
}

svg {
  flex: none;
  display: block;
}

.defs {
  position: absolute;
}

/* Couleurs communes des icônes */
.w { fill: none; stroke: #dadada; }
.l { fill: none; stroke: #fff; }
.b { fill: none; stroke: #62aee8; }
.y { fill: none; stroke: #fcd27e; }
.fw { fill: #dadada; }
.fl { fill: #fff; }
.fb { fill: #75c0f8; }
.fy { fill: #fcd27e; }
.fr { fill: #e8473a; }

/* Petites flèches */
.caret,
.caret-up,
.caret-right {
  flex: none;
  width: 0;
  height: 0;
  border: 3px solid transparent;
  border-top: 4px solid #dadada;
  border-bottom: 0;
}

.caret.lg {
  border-width: 5px 5px 0;
}

.caret.dim {
  border-top-color: #8a8e95;
}

.caret.gray {
  border-top-color: #888d95;
}

.caret-up {
  border-top: 0;
  border-bottom: 4px solid #777;
}

.caret-right {
  border: 5px solid transparent;
  border-left-color: #f0f0f0;
  border-right: 0;
}

/* Barre de titre */
.titlebar,
.menubar,
.ribbon-tabs {
  font-family: "Noto Sans", "Open Sans", sans-serif;
}

.titlebar {
  display: flex;
  height: 28px;
  padding-bottom: 8px;
  align-items: center;
}

.quick {
  display: flex;
  flex: 0 0 650px;
  align-items: center;
}

.quick button {
  width: 30px;
}

.quick .logo {
  width: 53px;
  justify-content: flex-start;
  padding-left: 1px;
  gap: 6px;
}

.lt {
  display: flex;
  flex-direction: column;
  align-items: center;
  color: #d8342c;
  font-size: 13px;
  line-height: 14px;
}

.quick .narrow {
  width: 14px;
}

.quick .custom {
  width: 24px;
}

.quick .share {
  width: auto;
  gap: 6px;
  margin-left: 3px;
  color: #8fcbf5;
}

.app-title {
  display: flex;
  gap: 18px;
  padding-top: 4px;
}

.info-center {
  display: flex;
  align-items: center;
  margin-left: auto;
}

.search {
  width: 223px;
  height: 24px;
  margin: 0 5px 0 6px;
  padding: 0 3px;
  border: 0;
  background: #485261;
  color: #fff;
  font: italic 13px "Noto Sans", sans-serif;
}

.search::placeholder {
  color: #b8bcc2;
}

.user {
  gap: 7px;
  width: 141px;
  margin-left: 9px;
  justify-content: flex-start;
}

.user .caret {
  margin-left: auto;
}

.apps {
  gap: 9px;
  width: 48px;
  margin-left: 12px;
  justify-content: flex-start;
}

.help {
  gap: 10px;
  width: 48px;
  padding-left: 10px;
  border-left: 1px solid #414a5b;
}

.q {
  fill: #3b4453;
  font-size: 16px;
}

.win {
  display: flex;
  align-items: center;
  gap: 15px;
  margin-left: 87px;
}

/* Menus */
.menubar {
  display: flex;
  height: 24px;
  align-items: center;
  border-bottom: 1px solid #3b4453;
  color: #b4b6b9;
}

.menubar a {
  padding: 0 14px 0 12px;
}

.menubar .win {
  gap: 5px;
  margin-left: auto;
}

.ribbon-tabs {
  display: flex;
  height: 30px;
  padding: 5px 0 0 1px;
  align-items: center;
  color: #b4b6b9;
}

.ribbon-tabs a {
  height: 25px;
  padding: 2px 12px 0;
}

.ribbon-tabs .active {
  background: #3b4453;
  color: #fff;
}

.collapse {
  width: 19px;
  height: 9px;
  margin: 0 5px 0 25px;
  background: #f4f4f4;
}

/* Ruban */
.ribbon {
  display: flex;
  height: 124px;
  background: #3b4453;
}

.panel {
  display: flex;
  flex-direction: column;
  flex: none;
  padding-top: 5px;
  border-right: 1px solid #222932;
}

.body {
  display: flex;
  height: 93px;
  padding-left: 4px;
}

.p-dessin { width: 285px; }
.p-modif { width: 344px; }
.p-annot { width: 222px; }
.p-calques { width: 341px; }
.p-bloc { width: 100px; }
.p-prop { width: 301px; }
.p-group { width: 99px; }
.p-util { width: 117px; }
.p-clip { flex: 1; border-right: 0; }

.p-dessin .body { padding-left: 0; }
.p-modif .body { padding-left: 7px; }
.p-annot .body { padding-left: 8px; }
.p-calques .body,
.p-bloc .body,
.p-prop .body { padding-left: 1px; }
.p-util .body { padding-left: 8px; }

.panel-title {
  position: relative;
  display: flex;
  height: 26px;
  align-items: center;
  justify-content: center;
  gap: 7px;
  padding-top: 3px;
}

.launcher {
  position: absolute;
  right: 6px;
  bottom: 7px;
}

.big {
  display: block;
  padding-top: 3px;
  line-height: 20px;
  text-align: center;
  align-self: flex-start;
}

.big svg {
  margin: 0 auto 4px;
}

.big .caret {
  display: block;
  margin: 3px auto 0;
}

.w48 { width: 48px; }
.w50 { width: 50px; }
.w56 { width: 56px; }
.w62 { width: 62px; }
.w66 { width: 66px; }
.w70 { width: 70px; }
.w74 { width: 74px; }
.w100 { width: 100px; }

.rows {
  display: flex;
  flex-direction: column;
}

.c99 { width: 99px; }
.c96 { width: 96px; }
.c112 { width: 112px; }

.rows > button {
  height: 31px;
  gap: 7px;
  padding: 0 2px;
  justify-content: flex-start;
}

.p-dessin .rows {
  margin-left: 4px;
}

.p-dessin .rows > button {
  gap: 10px;
}

.c99 > button,
.c96 > button,
.c112 > button {
  padding: 0;
}

.c112 .caret,
.p-annot .rows .caret {
  margin-left: 7px;
}

.p-bloc .rows > button {
  gap: 11px;
}

.p-group .rows > button,
.p-util .rows > button {
  width: 29px;
  height: 27px;
  margin: 2px 0;
  padding: 0;
  justify-content: center;
}

.p-group .rows > .on {
  border: 1px solid #75c0f8;
  background: #46607a;
}

.p-util .rows {
  margin-left: 4px;
}

.combo {
  display: flex;
  height: 29px;
  margin-bottom: 2px;
  padding: 0 2px 0 8px;
  align-items: center;
  gap: 5px;
  border: 1px solid #2b313d;
  background: #4b586b;
}

.layer-combo {
  width: 261px;
  padding: 0 1px 0 4px;
}

.combo select {
  flex: 1;
  min-width: 0;
  padding: 0;
  border: 0;
  appearance: none;
  background: none;
  color: inherit;
  font: inherit;
}

.combo .clip {
  flex: 0 0 54px;
  overflow: hidden;
}

.combo .clip + .caret {
  margin-left: auto;
}

.swatch {
  flex: none;
  width: 18px;
  height: 18px;
  border: 1px solid #dadada;
  background: #000;
}

.line {
  width: 80px;
  height: 1px;
  margin-right: -4px;
  background: #f0f0f0;
}

.combos {
  width: 172px;
}

.combos .swatch {
  width: 20px;
  height: 20px;
}

.icons {
  width: 25px;
  padding: 5px 0 0 1px;
  gap: 11px;
}

.tools {
  display: flex;
  height: 31px;
}

.tools button {
  width: 30px;
}

/* Onglets de fichiers */
.file-tabs {
  display: flex;
  height: 37px;
  padding: 5px 0 0 23px;
  border-bottom: 5px solid #3b4453;
}

.file-tab {
  position: relative;
  z-index: 0;
  display: flex;
  width: 155px;
  padding: 0 14px;
  align-items: center;
  color: #b4b6b9;
}

.file-tab::before,
.file-tab::after {
  content: "";
  position: absolute;
  z-index: -1;
  top: 0;
  bottom: 0;
  left: 0;
  width: 60%;
  background: #303845;
  border-radius: 12px 0 0 0;
  transform: skewX(-16deg);
}

.file-tab::after {
  left: auto;
  right: 0;
  border-radius: 0 12px 0 0;
  transform: skewX(16deg);
}

.file-tab.active {
  width: 229px;
  padding: 0 13px;
  gap: 8px;
  color: #fff;
  font-weight: bold;
}

.file-tab.active::before,
.file-tab.active::after {
  background: #3b4453;
}

.tab-plus {
  width: 24px;
  height: 18px;
  margin: 6px 0 0 11px;
  border-radius: 4px 12px 4px 12px;
  background: #303845;
  color: #a9adb3;
  font-size: 18px;
  font-weight: bold;
}

/* Zone de dessin */
.canvas {
  position: relative;
  flex: 1;
  overflow: hidden;
  background: #fefefe;
}

.drawing {
  position: absolute;
}

.thin { fill: none; stroke: #111; }
.tick { fill: none; stroke: #111; stroke-width: 1.3; }
.edge { stroke: #666a70; stroke-width: 1.5; }
.ext { stroke: #777b80; stroke-width: 2; }
.dim { stroke: #777; stroke-width: 2; }
.solid { stroke: #222; stroke-width: 1.6; fill: none; }
.dots { fill: none; stroke: #222; stroke-dasharray: 1 2; }
.base { stroke: #3c3f45; stroke-width: 2; }
.base.dark { stroke: #2d0f12; }

.axis {
  fill: none;
  stroke: #f8403c;
  stroke-width: 1.5;
  stroke-dasharray: 187 31.5 31 31;
}

.axis.dark {
  stroke: #3d1418;
  stroke-width: 2;
}

.cote text {
  font: 28px "Liberation Sans", Arial, sans-serif;
  text-anchor: middle;
}

.cote .slanted {
  font-size: 27px;
}

.cmd {
  position: absolute;
  top: 1px;
  left: 481px;
  width: 955px;
  font: 15px/19px "DejaVu Sans Mono", monospace;
}

.cmd-bar {
  display: flex;
  height: 33px;
  align-items: center;
  border: 1px solid #666e79;
  border-radius: 3px;
  background: #fefefe;
}

.cmd-tools {
  display: flex;
  width: 69px;
  height: 31px;
  padding-left: 4px;
  align-items: center;
  gap: 6px;
  background: #666e79;
}

.wrench {
  margin-left: 8px;
}

.grip {
  width: 7px;
  height: 22px;
  background: repeating-linear-gradient(transparent 0 2px, #666e79 2px 4px), repeating-linear-gradient(90deg, #fff 0 2px, transparent 2px 4px);
}

.prompt {
  margin: 0 2px 0 5px;
}

.cmd input {
  flex: 1;
  margin-left: 8px;
  padding: 0;
  border: 0;
  background: none;
  font: inherit;
  font-style: italic;
}

.cmd input::placeholder {
  color: #929292;
}

.cmd .caret-up {
  margin-right: 6px;
  border-width: 0 4px 5px;
}

.history {
  display: flex;
  flex-direction: column;
  align-items: flex-start;
  gap: 6px;
  padding: 2px 0 0 77px;
  color: #fff;
}

.history span {
  padding: 0 2px;
  border-radius: 3px;
  background: #dadada;
}

.history span:nth-child(2) {
  background: #d0d0d0;
}

.history span:nth-child(3) {
  background: #c8c8c8;
}

.navbar {
  position: absolute;
  top: 77px;
  right: -4px;
  border: 2px solid #c2c2c2;
  border-radius: 6px;
  background: rgba(246, 246, 246, 0.85);
}

.nav-txt {
  fill: #d3d8dd;
  stroke: none;
  font: bold 12px "Liberation Sans", Arial, sans-serif;
}

/* Onglets de présentation */
.layout-tabs {
  display: flex;
  height: 27px;
  padding: 0 0 4px 12px;
  border-top: 1px solid #3b4453;
  color: #b4b6b9;
}

.layout-tabs a {
  width: 119px;
  padding: 1px 0 0 14px;
  border-radius: 0 0 14px 14px;
  background: #303845;
}

.layout-tabs .active {
  width: 67px;
  background: #3b4453;
  color: #fff;
  font-weight: bold;
}

.layout-tabs button {
  width: 26px;
  height: 18px;
  margin: 2px 0 0 6px;
  border-radius: 12px 4px 12px 4px;
  background: #303845;
  color: #a9adb3;
  font-size: 18px;
  font-weight: bold;
}

/* Barre d'état */
.status {
  display: flex;
  height: 30px;
  justify-content: flex-end;
  gap: 3px;
}

.grp {
  display: flex;
}

.status button {
  width: 30px;
  border-left: 1px solid #2b313d;
  background: #3b4453;
}

.status .drop {
  width: 21px;
  border-left: 0;
}

.status .on {
  border: 1px solid #3b4453;
  background: #5c8bbf;
}

.status .model {
  width: 50px;
}

.status .scale {
  width: 23px;
  border-left: 0;
}

.status .wide {
  width: 34px;
}

.status .menu {
  width: 28px;
}
```
